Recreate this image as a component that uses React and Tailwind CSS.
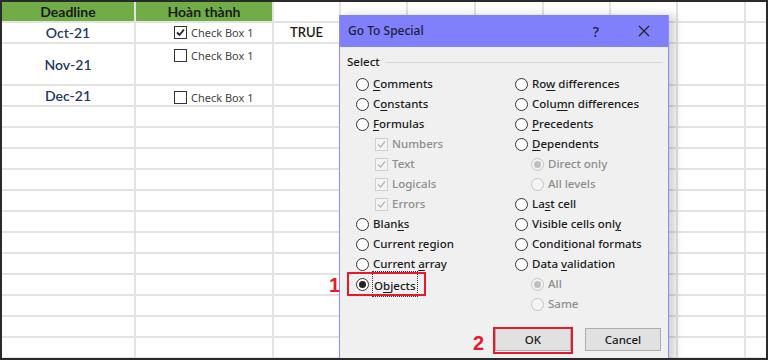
import React from "react";

const colW = [134, 138, 67, 67, 68, 68, 67, 67, 68, 22];
const rowH = [21, 21, 42, 21, 21, 21, 21, 21, 21, 21, 21, 21, 21, 21, 21, 21, 21];

function Cell({ w, h, children, className = "" }) {
  return (
    <div
      className={`shrink-0 border-r-2 border-b-2 border-[#e3e3e3] ${className}`}
      style={{ width: w, height: h }}
    >
      {children}
    </div>
  );
}

function XlCheck({ checked }) {
  return (
    <div className="flex items-center gap-[4px]">
      <div className="w-[13px] h-[13px] border border-[#333] bg-white flex items-center justify-center">
        {checked && (
          <svg width="11" height="11" viewBox="0 0 11 11">
            <path d="M2 5.5 L4.5 8 L9 2.5" fill="none" stroke="#222" strokeWidth="1.8" />
          </svg>
        )}
      </div>
      <span className="text-[11px] text-[#444] font-['Noto_Sans',sans-serif] leading-none">Check Box 1</span>
    </div>
  );
}

function Sheet() {
  const rows = rowH.map((h, r) => {
    const cells = colW.map((w, c) => {
      let content = null;
      let cls = "";
      if (r === 0 && c < 2) {
        cls = "bg-[#70ad47] border-[#70ad47] flex items-center justify-center";
        content = (
          <span className="font-bold text-[14px] text-[#1b1b1b]">{c === 0 ? "Deadline" : "Hoàn thành"}</span>
        );
      }
      if (r === 1 && c === 0) {
        cls = "flex items-center justify-center";
        content = <span className="text-[14px] font-semibold text-[#1f3864]">Oct-21</span>;
      }
      if (r === 2 && c === 0) {
        cls = "flex items-center justify-center";
        content = <span className="text-[14px] font-semibold text-[#1f3864]">Nov-21</span>;
      }
      if (r === 3 && c === 0) {
        cls = "flex items-center justify-center";
        content = <span className="text-[14px] font-semibold text-[#1f3864]">Dec-21</span>;
      }
      if (r === 1 && c === 1) {
        cls = "flex items-center pl-[38px]";
        content = <XlCheck checked />;
      }
      if (r === 2 && c === 1) {
        cls = "flex items-start pt-[5px] pl-[38px]";
        content = <XlCheck />;
      }
      if (r === 3 && c === 1) {
        cls = "flex items-end pb-[1px] pl-[38px]";
        content = <XlCheck />;
      }
      if (r === 1 && c === 2) {
        cls = "flex items-center justify-center";
        content = <span className="text-[13px] font-semibold text-[#1b1b1b]">TRUE</span>;
      }
      return (
        <Cell key={c} w={w} h={h} className={cls}>
          {content}
        </Cell>
      );
    });
    return (
      <div key={r} className="flex">
        {cells}
      </div>
    );
  });
  return <div className="flex flex-col font-['Lato',sans-serif]">{rows}</div>;
}

function Radio({ checked, disabled, dot }) {
  return (
    <div
      className={`w-[13px] h-[13px] rounded-full border shrink-0 flex items-center justify-center ${
        disabled ? "border-[#c4c4c4] bg-[#f4f4f4]" : "border-[#333] bg-white"
      }`}
    >
      {checked && <div className="w-[7px] h-[7px] rounded-full bg-[#222]" />}
      {dot && <div className="w-[7px] h-[7px] rounded-full bg-[#c0c0c0]" />}
    </div>
  );
}

function DisCheck() {
  return (
    <div className="w-[13px] h-[13px] border border-[#cfcfcf] bg-[#f4f4f4] shrink-0 flex items-center justify-center">
      <svg width="11" height="11" viewBox="0 0 11 11">
        <path d="M2 5.5 L4.5 8 L9 2.5" fill="none" stroke="#b5b5b5" strokeWidth="1.2" />
      </svg>
    </div>
  );
}

function Label({ pre = "", u = "", post = "", disabled }) {
  return (
    <span className={`text-[11.5px] leading-none ${disabled ? "text-[#8d8d8d]" : "text-[#1a1a1a]"}`}>
      {pre}
      {u && <span className="underline underline-offset-2">{u}</span>}
      {post}
    </span>
  );
}

function Row({ children, indent = 0 }) {
  return (
    <div className="h-[20px] flex items-center gap-[4px]" style={{ paddingLeft: indent }}>
      {children}
    </div>
  );
}

function Dialog() {
  return (
    <div className="absolute left-[337px] top-[13px] w-[330px] h-[347px] bg-[#f0f0f0] border-x border-[#8c8cf5] shadow-[6px_0_8px_rgba(0,0,0,0.18)] font-['Noto_Sans',sans-serif] font-medium">
      <div className="h-[32px] bg-[#8080fb] flex items-center pl-[8px] text-[#1c1c3c]">
        <span className="text-[12px] flex-1">Go To Special</span>
        <span className="text-[14px] w-[16px] text-center mr-[34px]">?</span>
        <svg width="12" height="12" viewBox="0 0 12 12" className="mr-[18px]">
          <path d="M1 1 L11 11 M11 1 L1 11" stroke="#222" strokeWidth="1.3" />
        </svg>
      </div>
      <div className="flex items-center gap-[6px] pl-[7px] pr-[6px] h-[27px] pt-[3px]">
        <span className="text-[11.5px] text-[#1a1a1a]">Select</span>
        <div className="flex-1 h-px bg-[#d5d5d5]" />
      </div>
      <div className="flex">
        <div className="w-[175px] pl-[16px] flex flex-col">
          <Row><Radio /><Label u="C" post="omments" /></Row>
          <Row><Radio /><Label pre="C" u="o" post="nstants" /></Row>
          <Row><Radio /><Label u="F" post="ormulas" /></Row>
          <Row indent={19}><DisCheck /><Label pre="Numbers" disabled /></Row>
          <Row indent={19}><DisCheck /><Label pre="Text" disabled /></Row>
          <Row indent={19}><DisCheck /><Label pre="Logicals" disabled /></Row>
          <Row indent={19}><DisCheck /><Label pre="Errors" disabled /></Row>
          <Row><Radio /><Label pre="Blan" u="k" post="s" /></Row>
          <Row><Radio /><Label pre="Current " u="r" post="egion" /></Row>
          <Row><Radio /><Label pre="Current " u="a" post="rray" /></Row>
          <Row>
            <Radio checked />
            <span className="outline-1 outline-dotted outline-[#333] px-px">
              <Label pre="O" u="b" post="jects" />
            </span>
          </Row>
        </div>
        <div className="flex-1 flex flex-col">
          <Row><Radio /><Label pre="Ro" u="w" post=" differences" /></Row>
          <Row><Radio /><Label pre="Colu" u="m" post="n differences" /></Row>
          <Row><Radio /><Label u="P" post="recedents" /></Row>
          <Row><Radio /><Label u="D" post="ependents" /></Row>
          <Row indent={16}><Radio disabled dot /><Label pre="Direct only" disabled /></Row>
          <Row indent={16}><Radio disabled /><Label pre="All levels" disabled /></Row>
          <Row><Radio /><Label pre="La" u="s" post="t cell" /></Row>
          <Row><Radio /><Label pre="Visible cells onl" u="y" /></Row>
          <Row><Radio /><Label pre="Condi" u="t" post="ional formats" /></Row>
          <Row><Radio /><Label pre="Data " u="v" post="alidation" /></Row>
          <Row indent={16}><Radio disabled dot /><Label pre="All" disabled /></Row>
          <Row indent={16}><Radio disabled /><Label pre="Same" disabled /></Row>
        </div>
      </div>
      <div className="flex justify-end gap-[14px] pr-[7px] mt-[14px]">
        <div className="w-[76px] h-[23px] bg-[#e1e1e1] border border-[#adadad] flex items-center justify-center text-[11.5px] text-[#1a1a1a]">OK</div>
        <div className="w-[76px] h-[23px] bg-[#e1e1e1] border border-[#adadad] flex items-center justify-center text-[11.5px] text-[#1a1a1a]">Cancel</div>
      </div>
    </div>
  );
}

export default function App() {
  return (
    <div className="relative w-[768px] h-[360px] overflow-hidden bg-white border-2 border-[#2a2a2a]">
      <Sheet />
      <Dialog />
      {/* annotations */}
      <div className="absolute left-[345px] top-[270px] w-[79px] h-[24px] border-2 border-[#e8192c]" />
      <div className="absolute left-[491px] top-[325px] w-[80px] h-[27px] border-2 border-[#e8192c]" />
      <span className="absolute left-[327px] top-[273px] text-[20px] font-bold text-[#e8192c] font-['Liberation_Sans',sans-serif] leading-none">1</span>
      <span className="absolute left-[471px] top-[331px] text-[20px] font-bold text-[#e8192c] font-['Liberation_Sans',sans-serif] leading-none">2</span>
    </div>
  );
}
